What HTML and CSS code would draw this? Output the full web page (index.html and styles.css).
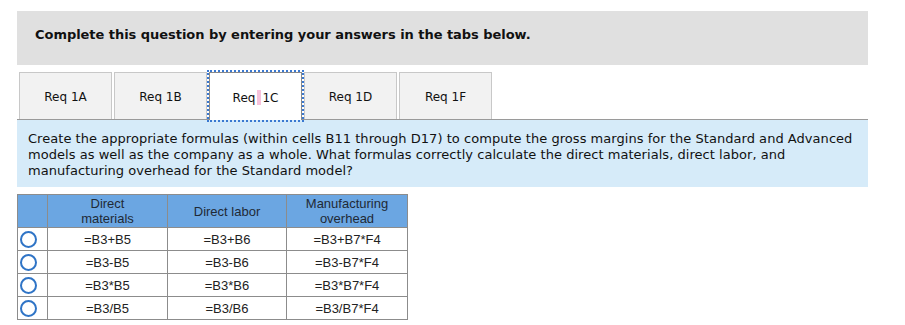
FILE: index.html
```html
<!DOCTYPE html>
<html>
<head>
<meta charset="utf-8">
<link rel="stylesheet" href="styles.css">
</head>
<body>
<div class="page">
  <div class="banner">Complete this question by entering your answers in the tabs below.</div>
  <div class="tabs">
    <div class="tab">Req 1A</div>
    <div class="tab">Req 1B</div>
    <div class="tab active">Req<span class="caret"></span>1C</div>
    <div class="tab">Req 1D</div>
    <div class="tab">Req 1F</div>
  </div>
  <div class="prompt">Create the appropriate formulas (within cells B11 through D17) to compute the gross margins for the Standard and Advanced models as well as the company as a whole. What formulas correctly calculate the direct materials, direct labor, and manufacturing overhead for the Standard model?</div>
  <table class="choices">
    <thead>
      <tr>
        <th class="radio-col"></th>
        <th class="c1">Direct<br>materials</th>
        <th class="c2">Direct labor</th>
        <th class="c3">Manufacturing<br>overhead</th>
      </tr>
    </thead>
    <tbody>
      <tr><td class="radio-col"><span class="radio"></span></td><td>=B3+B5</td><td>=B3+B6</td><td>=B3+B7*F4</td></tr>
      <tr><td class="radio-col"><span class="radio"></span></td><td>=B3-B5</td><td>=B3-B6</td><td>=B3-B7*F4</td></tr>
      <tr><td class="radio-col"><span class="radio"></span></td><td>=B3*B5</td><td>=B3*B6</td><td>=B3*B7*F4</td></tr>
      <tr><td class="radio-col"><span class="radio"></span></td><td>=B3/B5</td><td>=B3/B6</td><td>=B3/B7*F4</td></tr>
    </tbody>
  </table>
</div>
</body>
</html>
```

FILE: styles.css
```css
html, body {
  margin: 0;
  padding: 0;
  background: #ffffff;
}

.page {
  padding: 11px 0 0 17px;
  width: 851px;
  font-family: "DejaVu Sans", Verdana, sans-serif;
  color: #111111;
}

.banner {
  background: #e0e0e0;
  height: 54px;
  box-sizing: border-box;
  padding: 16px 0 0 18px;
  font-size: 13px;
  font-weight: bold;
  line-height: 16px;
  letter-spacing: -0.04px;
  color: #111111;
}

.tabs {
  display: flex;
  gap: 2px;
  margin-top: 7px;
  padding-left: 2px;
  border-bottom: 1px solid #9a9a9a;
  height: 47px;
}

.tab {
  width: 93px;
  height: 47px;
  box-sizing: border-box;
  border: 1px solid #c8c8c8;
  border-bottom: none;
  background: #f2f2f2;
  font-size: 12px;
  line-height: 16px;
  padding-top: 2px;
  display: flex;
  align-items: center;
  justify-content: center;
  color: #111111;
}

.tab.active {
  background: #ffffff;
  border-color: #8a8a8a;
  height: 48px;
  position: relative;
  z-index: 1;
  outline: 2px dotted #3a78d0;
  outline-offset: 0;
}

.caret {
  display: inline-block;
  width: 4px;
  height: 15px;
  margin: 0 1px 0 2px;
  background: #f7c2dc;
}

.prompt {
  background: #d6ebf9;
  height: 67px;
  box-sizing: border-box;
  padding: 11px 10px 0 11px;
  font-size: 13px;
  line-height: 16px;
  letter-spacing: 0.04px;
  color: #111111;
}

.choices {
  margin-top: 7px;
  border-collapse: collapse;
  font-family: "Liberation Sans", Arial, sans-serif;
  font-size: 13px;
  color: #222222;
}

.choices th,
.choices td {
  border: 1px solid #8c8c8c;
  text-align: center;
  padding: 0;
}

.choices th {
  background: #6ba6e2;
  font-weight: normal;
  height: 32px;
  line-height: 15px;
  color: #1f2a36;
}

.choices td {
  height: 21px;
  padding-top: 1px;
  background: #ffffff;
}

.choices .radio-col {
  width: 29px;
  text-align: left;
  padding-top: 0;
}

.choices .c1 { width: 119px; }
.choices .c2 { width: 118px; }
.choices .c3 { width: 120px; }

.radio {
  display: block;
  width: 13px;
  height: 13px;
  margin-left: 2px;
  border: 2px solid #2f74c6;
  border-radius: 50%;
  box-sizing: content-box;
}
```
